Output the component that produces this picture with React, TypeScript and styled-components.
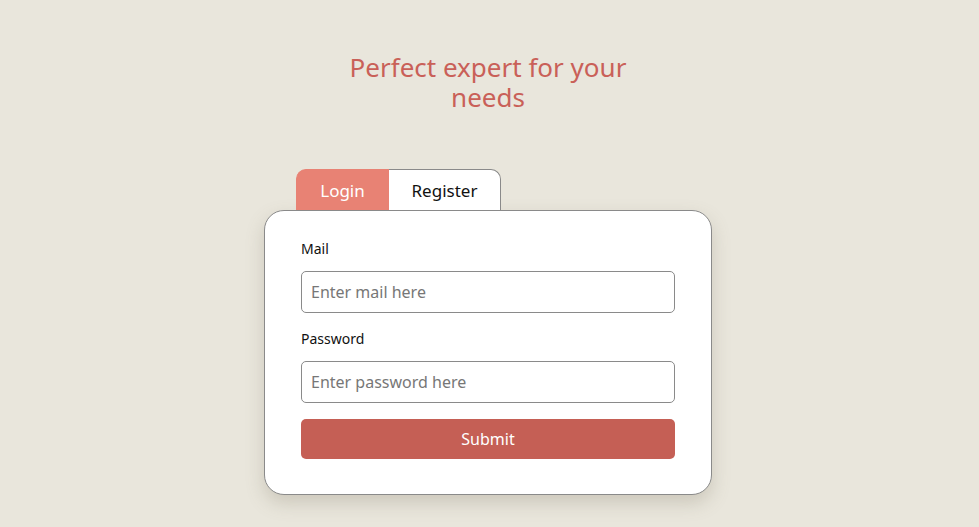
import React, { useState } from 'react'
import styled, { createGlobalStyle } from 'styled-components'

const GlobalStyle = createGlobalStyle`
  * {
    box-sizing: border-box;
  }
  body {
    margin: 0;
    background: #e9e6dc;
    font-family: "Noto Sans", "Open Sans", sans-serif;
  }
`

const Page = styled.div`
  display: flex;
  flex-direction: column;
  align-items: center;
  padding: 52px 3px 0 0;
  min-height: 527px;
`

const Title = styled.h1`
  margin: 0;
  width: 300px;
  text-align: center;
  font-size: 26px;
  font-weight: 400;
  line-height: 30px;
  color: #c96058;
`

const Panel = styled.div`
  margin-top: 57px;
  width: 448px;
`

const Tabs = styled.div`
  display: flex;
  padding-left: 32px;
`

const Tab = styled.button<{ $active?: boolean; $width: number }>`
  width: ${p => p.$width}px;
  height: 41px;
  font-family: inherit;
  font-size: 17px;
  cursor: pointer;
  background: ${p => (p.$active ? '#e88274' : '#fff')};
  color: ${p => (p.$active ? '#fff' : '#111')};
  border: 1px solid ${p => (p.$active ? '#e88274' : '#8a8a8a')};
  border-bottom: none;
  border-left: ${p => (p.$active ? '1px solid #e88274' : 'none')};
  border-radius: ${p => (p.$active ? '10px 0 0 0' : '0 10px 0 0')};
`

const Card = styled.form`
  background: #fff;
  border: 1px solid #8a8a8a;
  border-radius: 20px;
  padding: 28px 36px 35px;
  box-shadow: 0 8px 18px rgba(120, 110, 90, 0.25);
  display: flex;
  flex-direction: column;
`

const Label = styled.label`
  font-size: 14px;
  color: #111;
  line-height: 20px;
  margin-bottom: 12px;
`

const Input = styled.input`
  height: 42px;
  border: 1px solid #8a8a8a;
  border-radius: 5px;
  padding: 0 9px;
  font-family: inherit;
  font-size: 16px;
  color: #333;
  margin-bottom: 16px;
  &::placeholder {
    color: #777;
  }
`

const Submit = styled.button`
  height: 40px;
  border: none;
  border-radius: 5px;
  background: #c55f55;
  color: #fff;
  font-family: inherit;
  font-size: 16px;
  cursor: pointer;
`

const App: React.FC = () => {
  const [tab, setTab] = useState('login')

  return (
    <Page>
      <GlobalStyle />
      <Title>Perfect expert for your needs</Title>
      <Panel>
        <Tabs>
          <Tab type="button" $width={93} $active={tab === 'login'} onClick={() => setTab('login')}>
            Login
          </Tab>
          <Tab type="button" $width={112} $active={tab === 'register'} onClick={() => setTab('register')}>
            Register
          </Tab>
        </Tabs>
        <Card onSubmit={e => e.preventDefault()}>
          <Label htmlFor="mail">Mail</Label>
          <Input id="mail" type="text" placeholder="Enter mail here" />
          <Label htmlFor="password">Password</Label>
          <Input id="password" type="password" placeholder="Enter password here" />
          <Submit type="submit">Submit</Submit>
        </Card>
      </Panel>
    </Page>
  )
}

export default App
